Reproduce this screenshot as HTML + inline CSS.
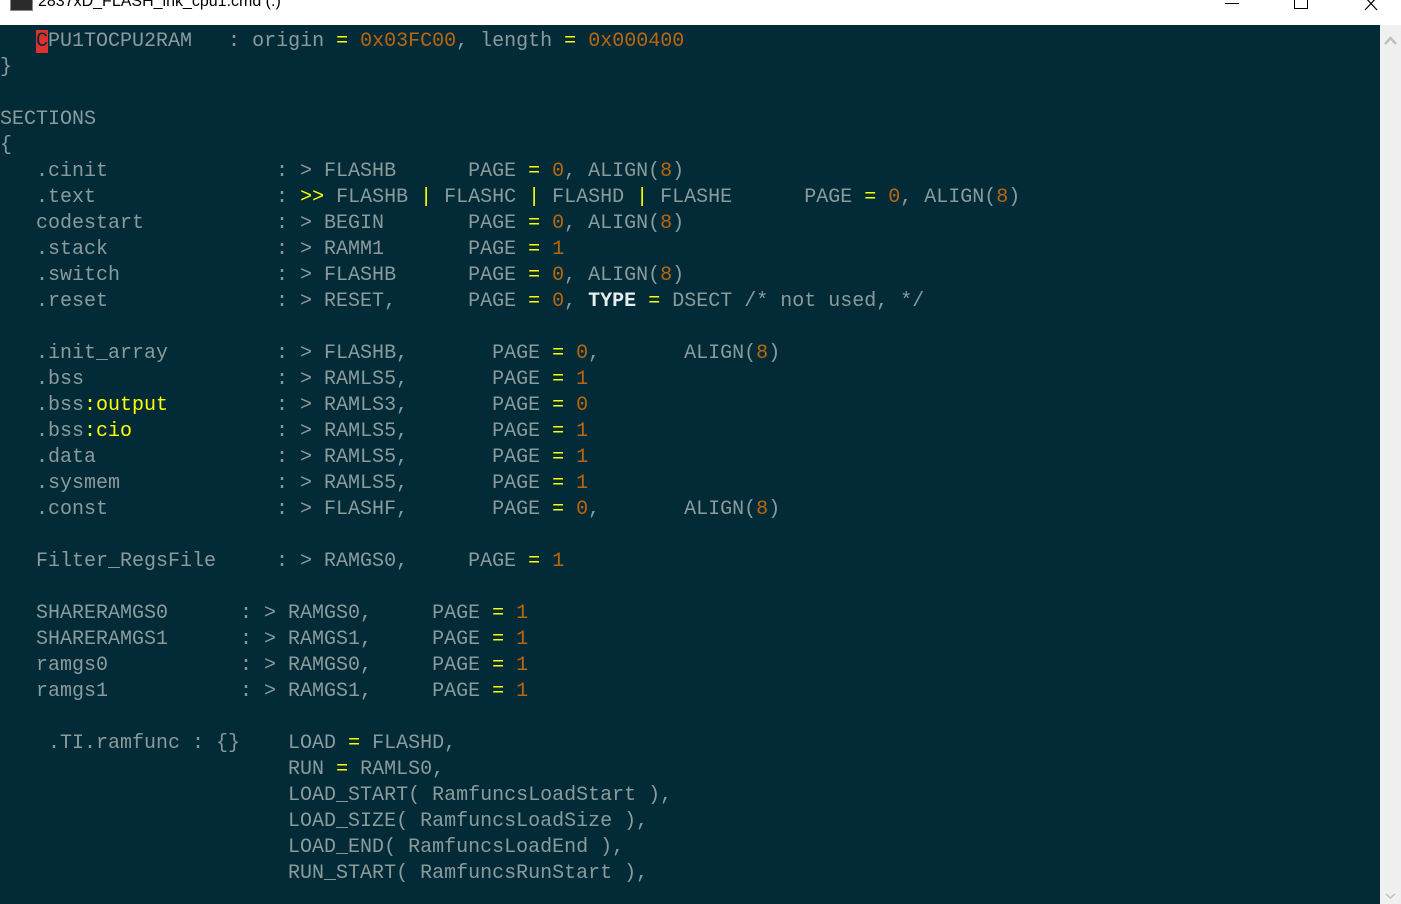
<!DOCTYPE html>
<html><head><meta charset="utf-8"><style>
html,body{margin:0;padding:0;width:1401px;height:904px;overflow:hidden;background:#fff;}
#title{position:absolute;left:0;top:0;width:1401px;height:25px;background:#fff;overflow:hidden;}
#title .t{position:absolute;left:38px;top:-7px;font:16px "Liberation Sans",sans-serif;color:#000;white-space:pre;}
#title .ic{position:absolute;left:10px;top:-4px;width:21px;height:14px;background:#2b2b2b;border:1px solid #888;border-top:none;}
#term{position:absolute;left:0;top:25px;width:1380px;height:879px;background:#022b37;}
#sb{position:absolute;left:1380px;top:25px;width:21px;height:879px;background:#f0f0f0;}
pre{margin:0;position:absolute;left:0;top:29px;font:20px/26px "Liberation Mono",monospace;color:#8b9b9c;white-space:pre;}
.o{color:#b8670e}.y{color:#ffff00}.w{color:#e8eeee;font-weight:bold}
.cur{background:#dc322f;color:#002b36}
</style></head><body>
<div id="title"><div class="ic"></div><div class="t">2837xD_FLASH_lnk_cpu1.cmd (.)</div>
<div style="position:absolute;left:1225px;top:3px;width:14px;height:1px;background:#000"></div>
<div style="position:absolute;left:1294px;top:-5px;width:12px;height:13px;border:1px solid #000;border-top:none"></div>
<svg style="position:absolute;left:1363px;top:0" width="16" height="12"><path d="M2 -3 L14 10 M14 -3 L2 10" stroke="#000" stroke-width="1.2"/></svg>
</div>
<div id="term"></div>
<div id="sb"><svg width="21" height="30"><path d="M5 19 L10.5 13 L16 19" stroke="#c0c0c0" stroke-width="2.5" fill="none"/></svg>
<svg style="position:absolute;left:0;top:862px" width="21" height="17"><path d="M6 7 L10.5 11 L15 7" stroke="#c0c0c0" stroke-width="1.5" fill="none"/></svg></div>
<pre>   <span class="cur">C</span>PU1TOCPU2RAM   : origin <span class="y">=</span> <span class="o">0x03FC00</span>, length <span class="y">=</span> <span class="o">0x000400</span>
}

SECTIONS
{
   .cinit              : &gt; FLASHB      PAGE <span class="y">=</span> <span class="o">0</span>, ALIGN(<span class="o">8</span>)
   .text               : <span class="y">&gt;&gt;</span> FLASHB <span class="y">|</span> FLASHC <span class="y">|</span> FLASHD <span class="y">|</span> FLASHE      PAGE <span class="y">=</span> <span class="o">0</span>, ALIGN(<span class="o">8</span>)
   codestart           : &gt; BEGIN       PAGE <span class="y">=</span> <span class="o">0</span>, ALIGN(<span class="o">8</span>)
   .stack              : &gt; RAMM1       PAGE <span class="y">=</span> <span class="o">1</span>
   .switch             : &gt; FLASHB      PAGE <span class="y">=</span> <span class="o">0</span>, ALIGN(<span class="o">8</span>)
   .reset              : &gt; RESET,      PAGE <span class="y">=</span> <span class="o">0</span>, <span class="w">TYPE</span> <span class="y">=</span> DSECT /* not used, */

   .init_array         : &gt; FLASHB,       PAGE <span class="y">=</span> <span class="o">0</span>,       ALIGN(<span class="o">8</span>)
   .bss                : &gt; RAMLS5,       PAGE <span class="y">=</span> <span class="o">1</span>
   .bss<span class="y">:output</span>         : &gt; RAMLS3,       PAGE <span class="y">=</span> <span class="o">0</span>
   .bss<span class="y">:cio</span>            : &gt; RAMLS5,       PAGE <span class="y">=</span> <span class="o">1</span>
   .data               : &gt; RAMLS5,       PAGE <span class="y">=</span> <span class="o">1</span>
   .sysmem             : &gt; RAMLS5,       PAGE <span class="y">=</span> <span class="o">1</span>
   .const              : &gt; FLASHF,       PAGE <span class="y">=</span> <span class="o">0</span>,       ALIGN(<span class="o">8</span>)

   Filter_RegsFile     : &gt; RAMGS0,     PAGE <span class="y">=</span> <span class="o">1</span>

   SHARERAMGS0      : &gt; RAMGS0,     PAGE <span class="y">=</span> <span class="o">1</span>
   SHARERAMGS1      : &gt; RAMGS1,     PAGE <span class="y">=</span> <span class="o">1</span>
   ramgs0           : &gt; RAMGS0,     PAGE <span class="y">=</span> <span class="o">1</span>
   ramgs1           : &gt; RAMGS1,     PAGE <span class="y">=</span> <span class="o">1</span>

    .TI.ramfunc : {}    LOAD <span class="y">=</span> FLASHD,
                        RUN <span class="y">=</span> RAMLS0,
                        LOAD_START( RamfuncsLoadStart ),
                        LOAD_SIZE( RamfuncsLoadSize ),
                        LOAD_END( RamfuncsLoadEnd ),
                        RUN_START( RamfuncsRunStart ),
</pre>
</body></html>
